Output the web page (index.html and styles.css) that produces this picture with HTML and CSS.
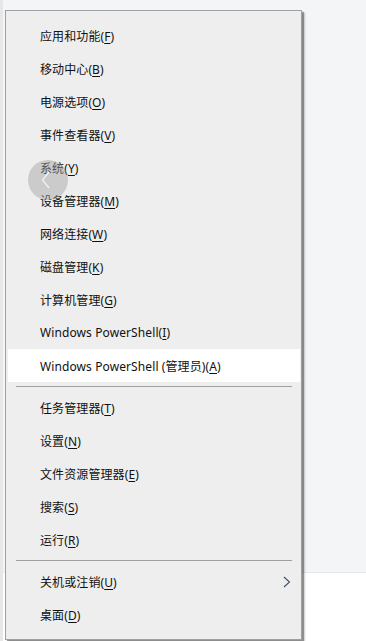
FILE: index.html
```html
<!DOCTYPE html>
<html lang="zh-CN">
<head>
<meta charset="utf-8">
<title>Win+X</title>
<link rel="stylesheet" href="styles.css">
</head>
<body>
<div class="desktop">
  <div class="top-area"></div>
  <div class="bottom-area"></div>
</div>
<div class="menu">
  <div class="item"><span>应用和功能(<u>F</u>)</span></div>
  <div class="item"><span>移动中心(<u>B</u>)</span></div>
  <div class="item"><span>电源选项(<u>O</u>)</span></div>
  <div class="item"><span>事件查看器(<u>V</u>)</span></div>
  <div class="item"><span>系统(<u>Y</u>)</span></div>
  <div class="item"><span>设备管理器(<u>M</u>)</span></div>
  <div class="item"><span>网络连接(<u>W</u>)</span></div>
  <div class="item"><span>磁盘管理(<u>K</u>)</span></div>
  <div class="item"><span>计算机管理(<u>G</u>)</span></div>
  <div class="item"><span>Windows PowerShell(<u>I</u>)</span></div>
  <div class="item active"><span>Windows PowerShell (管理员)(<u>A</u>)</span></div>
  <div class="sep"></div>
  <div class="item"><span>任务管理器(<u>T</u>)</span></div>
  <div class="item"><span>设置(<u>N</u>)</span></div>
  <div class="item"><span>文件资源管理器(<u>E</u>)</span></div>
  <div class="item"><span>搜索(<u>S</u>)</span></div>
  <div class="item"><span>运行(<u>R</u>)</span></div>
  <div class="sep"></div>
  <div class="item has-sub"><span>关机或注销(<u>U</u>)</span>
    <svg class="chev" width="8" height="12" viewBox="0 0 8 12"><path d="M1 1 L6.5 6 L1 11" fill="none" stroke="#3d4f6e" stroke-width="1.1"/></svg>
  </div>
  <div class="item"><span>桌面(<u>D</u>)</span></div>
</div>
<div class="back-btn">
  <svg width="10" height="18" viewBox="0 0 10 18"><path d="M8 1 L1.5 9 L8 17" fill="none" stroke="#f2f2f2" stroke-width="1.3"/></svg>
</div>
</body>
</html>
```

FILE: styles.css
```css
html, body {
  margin: 0;
  padding: 0;
  width: 366px;
  height: 641px;
  overflow: hidden;
}
body {
  font-family: "Noto Sans", "Noto Sans CJK SC", sans-serif;
  background: #ffffff;
}
.desktop {
  display: flex;
  flex-direction: column;
  height: 641px;
  border-left: 3px solid #e6e7e9;
  box-sizing: border-box;
}
.top-area {
  height: 573px;
  background: #f4f5f7;
  border-bottom: 1px solid #e6e8eb;
  box-sizing: border-box;
}
.bottom-area {
  flex: 1;
  background: #ffffff;
}
.menu {
  position: absolute;
  left: 5px;
  top: 10px;
  width: 297px;
  height: 630px;
  box-sizing: border-box;
  background: #eeeeee;
  border: 1px solid #a0a0a0;
  box-shadow: 2px 2px 1px rgba(0,0,0,0.35), 3px 3px 2px rgba(0,0,0,0.15);
  padding: 8px 0;
  display: flex;
  flex-direction: column;
}
.item {
  height: 33px;
  margin: 0 1px 0 2px;
  padding-left: 32px;
  padding-right: 9px;
  display: flex;
  align-items: center;
  font-size: 12px;
  color: #111111;
  letter-spacing: 0.1px;
}
.item u {
  text-decoration: underline;
  text-underline-offset: 2px;
}
.item.active {
  background: #ffffff;
}
.item.has-sub {
  justify-content: space-between;
}
.chev {
  display: block;
}
.sep {
  height: 1px;
  background: #a0a0a0;
  margin: 4px 9px 4px 10px;
}
.back-btn {
  position: absolute;
  left: 28px;
  top: 160px;
  width: 40px;
  height: 40px;
  border-radius: 50%;
  background: rgba(160,160,160,0.45);
  display: flex;
  align-items: center;
  justify-content: center;
}
.back-btn svg {
  margin-right: 4px;
}
```
